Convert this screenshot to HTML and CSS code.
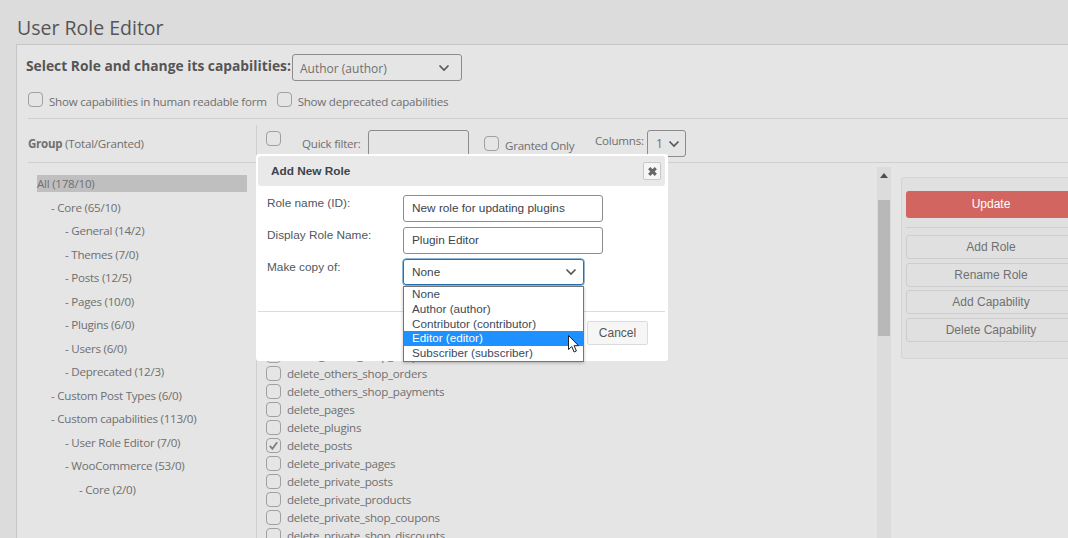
FILE: index.html
```html
<!DOCTYPE html>
<html lang="en">
<head>
<meta charset="utf-8">
<title>User Role Editor</title>
<link rel="stylesheet" href="styles.css">
</head>
<body>
<div class="page">
  <h1 class="page-title">User Role Editor</h1>
  <div class="panel">
    <div class="role-row">
      <strong class="role-label">Select Role and change its capabilities:</strong>
      <div class="sel role-select"><span>Author (author)</span><svg class="chev" viewBox="0 0 12 8"><path d="M1.500 1.500 6 6l4.500-4.500"/></svg></div>
    </div>
    <div class="options-row">
      <span class="cb"></span><span class="opt-text">Show capabilities in human readable form</span>
      <span class="cb opt-second"></span><span class="opt-text">Show deprecated capabilities</span>
    </div>
    <div class="columns">
      <div class="group-head"><b>Group</b> (Total/Granted)</div>
      <div class="toolbar">
        <span class="cb tb-all"></span>
        <span class="tb-filter">Quick filter:</span>
        <span class="tb-input"></span>
        <span class="cb tb-granted"></span>
        <span class="tb-granted-text">Granted Only</span>
        <span class="tb-columns">Columns:</span>
        <div class="sel tb-select"><span>1</span><svg class="chev" viewBox="0 0 12 8"><path d="M1.500 1.500 6 6l4.500-4.500"/></svg></div>
      </div>
      <ul class="tree">
        <li class="tree-item active">All (178/10)</li>
        <li class="tree-item l1">- Core (65/10)</li>
        <li class="tree-item l2">- General (14/2)</li>
        <li class="tree-item l2">- Themes (7/0)</li>
        <li class="tree-item l2">- Posts (12/5)</li>
        <li class="tree-item l2">- Pages (10/0)</li>
        <li class="tree-item l2">- Plugins (6/0)</li>
        <li class="tree-item l2">- Users (6/0)</li>
        <li class="tree-item l2">- Deprecated (12/3)</li>
        <li class="tree-item l1">- Custom Post Types (6/0)</li>
        <li class="tree-item l1">- Custom capabilities (113/0)</li>
        <li class="tree-item l2">- User Role Editor (7/0)</li>
        <li class="tree-item l2">- WooCommerce (53/0)</li>
        <li class="tree-item l3">- Core (2/0)</li>
      </ul>
      <div class="caps">
        <div class="cap-row"><span class="cb"></span><span>delete_others_shop_coupons</span></div>
        <div class="cap-row"><span class="cb"></span><span>delete_others_shop_orders</span></div>
        <div class="cap-row"><span class="cb"></span><span>delete_others_shop_payments</span></div>
        <div class="cap-row"><span class="cb"></span><span>delete_pages</span></div>
        <div class="cap-row"><span class="cb"></span><span>delete_plugins</span></div>
        <div class="cap-row"><span class="cb"><svg class="tick" viewBox="0 0 14 14"><path d="M3 7.500 5.800 10.500 11 3.500"/></svg></span><span>delete_posts</span></div>
        <div class="cap-row"><span class="cb"></span><span>delete_private_pages</span></div>
        <div class="cap-row"><span class="cb"></span><span>delete_private_posts</span></div>
        <div class="cap-row"><span class="cb"></span><span>delete_private_products</span></div>
        <div class="cap-row"><span class="cb"></span><span>delete_private_shop_coupons</span></div>
        <div class="cap-row"><span class="cb"></span><span>delete_private_shop_discounts</span></div>
      </div>
      <div class="scrollbar">
        <svg class="scroll-up" viewBox="0 0 8 5"><path d="M4 0 8 5H0z"/></svg>
        <div class="scroll-thumb"></div>
      </div>
      <aside class="actions">
        <div class="btn-update">Update</div>
        <div class="actions-rule"></div>
        <div class="btn">Add Role</div>
        <div class="btn">Rename Role</div>
        <div class="btn">Add Capability</div>
        <div class="btn">Delete Capability</div>
      </aside>
    </div>
  </div>
</div>

<div class="dialog">
  <div class="dialog-title">
    <span>Add New Role</span>
    <span class="dialog-close"><svg viewBox="0 0 10 10"><path d="M2 2 8 8M8 2 2 8"/></svg></span>
  </div>
  <div class="dialog-form">
    <label class="dl">Role name (ID):</label>
    <div class="field">New role for updating plugins</div>
    <label class="dl">Display Role Name:</label>
    <div class="field">Plugin Editor</div>
    <label class="dl">Make copy of:</label>
    <div class="sel copy-select"><span>None</span><svg class="chev" viewBox="0 0 12 8"><path d="M1.500 1.500 6 6l4.500-4.500"/></svg></div>
  </div>
  <div class="dialog-foot"><span class="btn-cancel">Cancel</span></div>
</div>

<ul class="dropdown">
  <li>None</li>
  <li>Author (author)</li>
  <li>Contributor (contributor)</li>
  <li class="hl">Editor (editor)</li>
  <li>Subscriber (subscriber)</li>
</ul>

<svg class="cursor" viewBox="0 0 12 18"><path d="M.5.500v14l3.300-3 2.300 5.500 2.300-1-2.300-5.300h4.400z"/></svg>
</body>
</html>
```
FILE: styles.css
```css
* { box-sizing: border-box; }
html, body { margin: 0; height: 538px; overflow: hidden; }
body { background: #dcdcdc; font-family: "Open Sans", sans-serif; font-size: 11.600px; letter-spacing: -.25px; color: #6f6f6f; position: relative; }
ul { list-style: none; margin: 0; padding: 0; }

.page { width: 1100px; height: 538px; padding: 14px 0 0 16px; overflow: hidden; }
.page-title { margin: 0; height: 30px; font-size: 19.500px; line-height: 28px; font-weight: 400; color: #555; padding-left: 1px; letter-spacing: 0; }
.panel { height: 520px; background: #e5e5e5; border: 1px solid #c6c6c6; padding: 9px 0 0 9px; }

.cb { display: block; flex: none; width: 15px; height: 15px; border: 1px solid #a0a0a0; border-radius: 4px; background: #e5e5e5; }
.tick { display: block; width: 13px; height: 13px; fill: none; stroke: #808080; stroke-width: 2; }

.sel { display: flex; align-items: center; justify-content: space-between; border: 1px solid #8c8c8c; border-radius: 3px; }
.chev { width: 12px; height: 8px; fill: none; stroke: #555; stroke-width: 1.600; flex: none; }

.role-row { display: flex; align-items: center; height: 27px; }
.role-label { font-size: 13.800px; color: #555; width: 266px; font-weight: 700; white-space: nowrap; letter-spacing: 0; margin-top: -4px; }
.role-select { width: 170px; height: 27px; padding: 1px 11px 0 7px; font-size: 12px; letter-spacing: 0; }

.options-row { display: flex; align-items: center; height: 15px; margin: 11px 0 0 2px; }
.opt-text { margin: 3px 0 0 6px; white-space: nowrap; }
.opt-second { margin-left: 10px; }

.columns { display: grid; grid-template-columns: 229px 621px 23px 190px; grid-template-rows: 44px 1fr; margin: 11px 0 0 2px; height: 430px; border-top: 1px solid #cfcfcf; }
.group-head { grid-column: 1; margin-top: 6px; padding-top: 11px; border-right: 1px solid #cfcfcf; border-bottom: 1px solid #cfcfcf; color: #6f6f6f; }
.group-head b { font-size: 11.500px; }

.toolbar { grid-column: 2 / 5; display: flex; align-items: flex-start; height: 44px; border-bottom: 1px solid #cfcfcf; padding: 11px 0 0 9px; margin-right: -40px; }
.tb-all { margin-top: 1px; }
.tb-filter { margin: 6px 0 0 21px; width: 66px; white-space: nowrap; }
.tb-input { width: 101px; height: 27px; border: 1px solid #8c8c8c; border-radius: 3px; }
.tb-granted { margin: 6px 0 0 15px; }
.tb-granted-text { margin: 8px 0 0 6px; width: 90px; white-space: nowrap; }
.tb-columns { margin-top: 3px; width: 52px; white-space: nowrap; }
.tb-select { width: 39px; height: 27px; padding: 0 5px 0 8px; font-size: 12px; }

.tree { grid-column: 1; grid-row: 2; padding: 12px 9px 0 9px; border-right: 1px solid #cfcfcf; }
.tree-item { height: 23.540px; line-height: 18px; white-space: nowrap; }
.tree-item.active { background: #bfbfbf; height: 17px; line-height: 17px; margin-bottom: 6.540px; }
.l1 { padding-left: 14px; }
.l2 { padding-left: 28px; }
.l3 { padding-left: 42px; }

.caps { grid-column: 2; grid-row: 2; padding: 183px 0 0 9px; overflow: hidden; }
.cap-row { display: flex; align-items: center; gap: 6px; height: 18px; white-space: nowrap; }

.scrollbar { grid-column: 3; grid-row: 2; width: 14px; margin: 4px 0 0 -1px; background: #dcdcdc; padding: 1px; }
.scroll-up { display: block; width: 8px; height: 5px; fill: #4f4f4f; margin: 5px auto 22px; }
.scroll-thumb { height: 136px; background: #b8b8b8; }

.actions { grid-column: 4; grid-row: 2; width: 190px; height: 182px; margin-top: 14px; background: #e0e0e0; border: 1px solid #d4d4d4; border-radius: 3px; padding: 13px 0 0 4px; letter-spacing: 0; }
.btn-update { width: 170px; height: 27px; text-align: center; background: #d2655f; color: #fff; border-radius: 3px; font: 400 12px/26px "Liberation Sans", sans-serif; }
.actions-rule { width: 170px; height: 1px; background: #d0d0d0; margin: 9px 0 7px; }
.btn { width: 170px; height: 24px; margin-bottom: 3.500px; border: 1px solid #cdcdcd; border-radius: 3px; text-align: center; font: 12px/22px "Liberation Sans", sans-serif; color: #707070; }

.dialog { position: absolute; left: 256px; top: 154px; width: 412px; height: 207px; background: #fff; border-radius: 3px; padding: 2px; font-family: "Liberation Sans", sans-serif; color: #50575e; letter-spacing: 0; }
.dialog-title { display: flex; justify-content: space-between; align-items: center; height: 30px; margin-right: 1px; padding: 0 4px 0 13px; background: #e9e9e9; border-radius: 3px; font-size: 11.800px; font-weight: 700; color: #3c434a; }
.dialog-close { display: flex; align-items: center; justify-content: center; width: 18px; height: 18px; background: #f6f6f6; border: 1px solid #c8c8c8; border-radius: 2px; }
.dialog-close svg { width: 11px; height: 11px; fill: none; stroke: #666; stroke-width: 2.800; }
.dialog-form { display: grid; grid-template-columns: 136px 200px; grid-template-rows: 27px 27px 27px; row-gap: 5px; height: 125px; padding: 9px 0 0 9px; font-size: 11.800px; }
.dl { padding-top: 1px; }
.field { border: 1px solid #8c8c8c; border-radius: 3px; padding-left: 8px; line-height: 24px; color: #3c434a; }
.copy-select { width: 181px; height: 26px; border-color: #2271b1; padding: 0 6px 1px 8px; color: #3c434a; box-shadow: 0 0 0 .5px #2271b1; }
.dialog-foot { display: flex; justify-content: flex-end; height: 50px; margin-right: 1px; border-top: 1px solid #dcdcdc; padding: 9px 17px 0 0; }
.btn-cancel { width: 61px; height: 24px; border: 1px solid #dcdcdc; background: #f6f6f6; border-radius: 2px; text-align: center; font-size: 12px; line-height: 22px; color: #555; }

.dropdown { position: absolute; left: 403px; top: 286px; width: 181px; height: 76px; background: #fff; border: 1px solid #767676; font: 11.700px/14px "Liberation Sans", sans-serif; letter-spacing: 0; color: #3a4a5c; box-shadow: 0 1px 3px rgba(0,0,0,.25); }
.dropdown li { padding-left: 8px; height: 14.800px; }
.dropdown .hl { background: #1e90ff; color: #fff; }

.cursor { position: absolute; left: 568px; top: 335px; width: 12px; height: 18px; fill: #fff; stroke: #222; stroke-width: 1; }
```
